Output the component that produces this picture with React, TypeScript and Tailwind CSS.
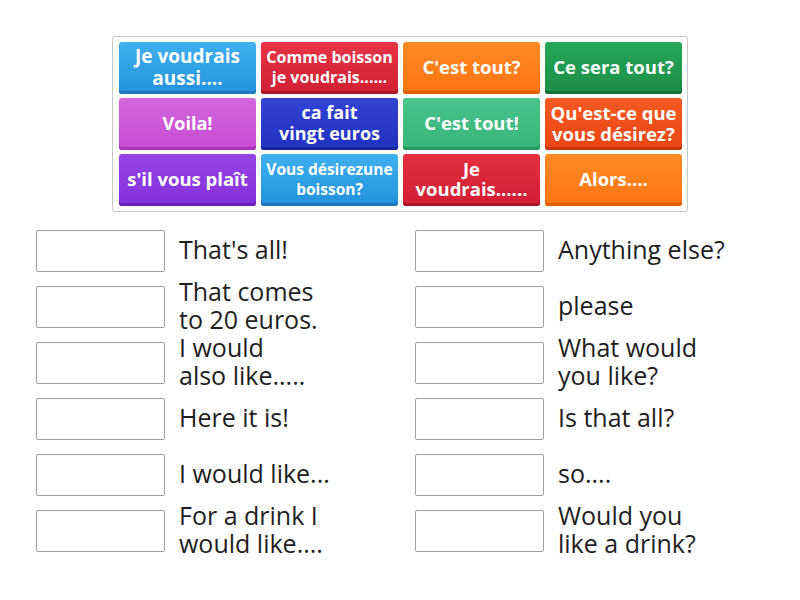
import React from "react";

type Tile = { text: React.ReactNode; bg: string; size: string };

const big = "text-[18.5px] leading-[22px]";

const tiles: Tile[] = [
  { text: <>Je voudrais<br />aussi....</>, bg: "bg-gradient-to-b from-[#3fb0f0] to-[#2192dc] shadow-[inset_0_-3px_0_#1a78c0]", size: "text-[19px] leading-[22px]" },
  { text: <>Comme boisson<br />je voudrais......</>, bg: "bg-gradient-to-b from-[#e83446] to-[#d01e33] shadow-[inset_0_-3px_0_#ad1428]", size: "text-[16px] leading-[20px]" },
  { text: "C'est tout?", bg: "bg-gradient-to-b from-[#ff8a24] to-[#ff740f] shadow-[inset_0_-3px_0_#e05e00]", size: big },
  { text: "Ce sera tout?", bg: "bg-gradient-to-b from-[#26a85a] to-[#1c8c48] shadow-[inset_0_-3px_0_#13723a]", size: big },
  { text: "Voila!", bg: "bg-gradient-to-b from-[#d466de] to-[#c44bd2] shadow-[inset_0_-3px_0_#a833b8]", size: "text-[18px] leading-[22px]" },
  { text: <>ca fait<br />vingt euros</>, bg: "bg-gradient-to-b from-[#3344d4] to-[#2030c0] shadow-[inset_0_-3px_0_#1622a0]", size: "text-[18px] leading-[21px]" },
  { text: "C'est tout!", bg: "bg-gradient-to-b from-[#48c48c] to-[#36b479] shadow-[inset_0_-3px_0_#259a62]", size: big },
  { text: <>Qu'est-ce que<br />vous désirez?</>, bg: "bg-gradient-to-b from-[#f65a22] to-[#ea4410] shadow-[inset_0_-3px_0_#c83300]", size: "text-[18.5px] leading-[21px]" },
  { text: "s'il vous plaît", bg: "bg-gradient-to-b from-[#9644e6] to-[#8430dc] shadow-[inset_0_-3px_0_#6a1cbc]", size: big },
  { text: <>Vous désirezune<br />boisson?</>, bg: "bg-gradient-to-b from-[#3fb0f0] to-[#2192dc] shadow-[inset_0_-3px_0_#1a78c0]", size: "text-[15.5px] leading-[20px]" },
  { text: <>Je<br />voudrais......</>, bg: "bg-gradient-to-b from-[#e3303f] to-[#d21c35] shadow-[inset_0_-3px_0_#ad1428]", size: "text-[18.5px] leading-[20px]" },
  { text: "Alors....", bg: "bg-gradient-to-b from-[#ff8a24] to-[#ff740f] shadow-[inset_0_-3px_0_#e05e00]", size: big },
];

const pairs: [React.ReactNode, React.ReactNode][] = [
  ["That's all!", "Anything else?"],
  [<>That comes<br />to 20 euros.</>, "please"],
  [<>I would<br />also like.....</>, <>What would<br />you like?</>],
  ["Here it is!", "Is that all?"],
  ["I would like...", "so...."],
  [<>For a drink I<br />would like....</>, <>Would you<br />like a drink?</>],
];

const Slot = ({ label }: { label: React.ReactNode }) => (
  <div className="flex items-center h-[42px]">
    <div className="w-[129px] h-[42px] shrink-0 border border-[#a0a0a0] rounded-[2px] bg-white" />
    <div className="ml-[14px] -mt-[4px] text-[25px] leading-[28px] text-[#1e1e1e] whitespace-nowrap">{label}</div>
  </div>
);

export default function App() {
  return (
    <div className="w-[800px] h-[600px] bg-white font-['Open_Sans',sans-serif]">
      <div className="pt-[36px] pl-[112px]">
        <div className="w-[576px] border border-[#c8c8c8] rounded-[3px] pt-[5px] pb-[5px] pl-[6px] pr-[5px]">
          <div className="grid grid-cols-[repeat(4,137px)] gap-x-[5px] gap-y-[4px]">
            {tiles.map((t, i) => (
              <div
                key={i}
                className={`h-[52px] rounded-[3px] flex items-center justify-center text-center text-white font-bold whitespace-nowrap ${t.size} ${t.bg}`}
              >
                <span className="-mt-[3px]">{t.text}</span>
              </div>
            ))}
          </div>
        </div>
      </div>
      <div className="pt-[18px] pl-[36px] grid grid-cols-[379px_1fr] gap-y-[14px]">
        {pairs.map(([a, b], i) => (
          <React.Fragment key={i}>
            <Slot label={a} />
            <Slot label={b} />
          </React.Fragment>
        ))}
      </div>
    </div>
  );
}
